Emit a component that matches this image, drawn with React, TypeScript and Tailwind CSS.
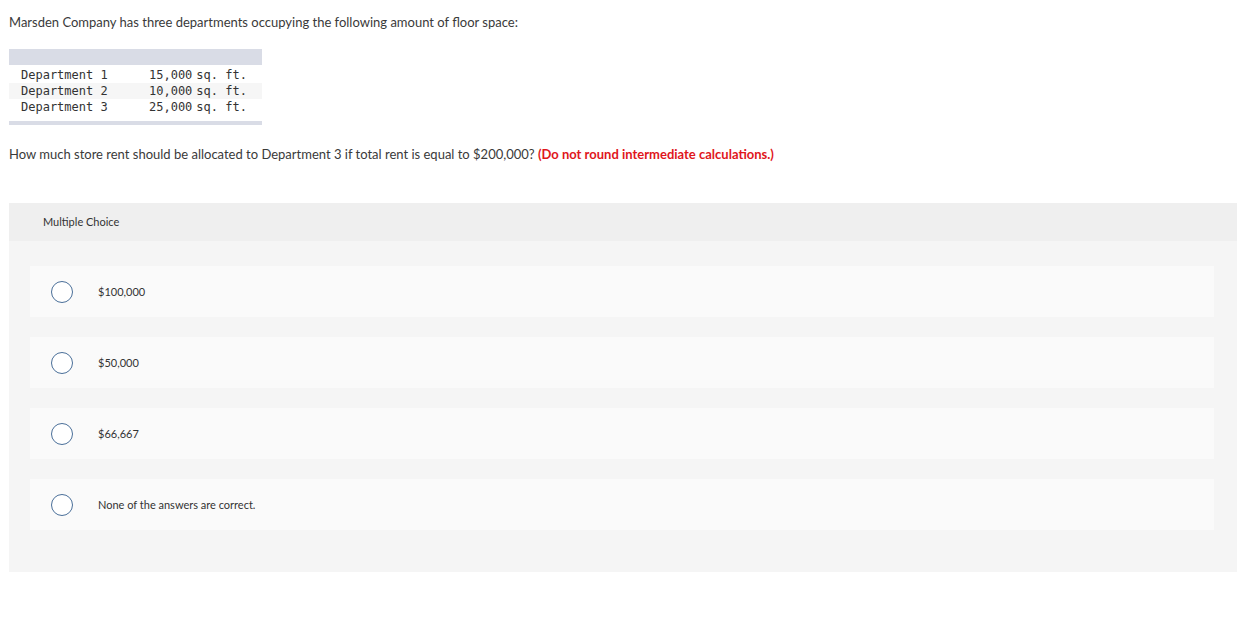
import React from "react";

const sans = { fontFamily: "Lato, 'Open Sans', sans-serif" };

const rows = [
  ["Department 1", "15,000", "sq. ft."],
  ["Department 2", "10,000", "sq. ft."],
  ["Department 3", "25,000", "sq. ft."],
];

const options = ["$100,000", "$50,000", "$66,667", "None of the answers are correct."];

export default function App() {
  return (
    <div className="bg-white w-[1249px] h-[619px] text-[#333]" style={sans}>
      <div className="pl-[9px] pr-[12px] pt-[13px]">
        <p className="text-[13px] leading-[18px] text-[#3a3a3a]">
          Marsden Company has three departments occupying the following amount of floor space:
        </p>
        <div className="mt-[18px] w-[253px]">
          <div className="h-[16px] bg-[#d9dce6]" />
          <div
            className="pt-[2px] text-[12px] text-[#333]"
            style={{ fontFamily: "'DejaVu Sans Mono', monospace" }}
          >
            {rows.map((r, i) => (
              <div
                key={i}
                className={`flex h-[16px] items-center ${i === 1 ? "bg-[#f6f6f6]" : "bg-white"}`}
              >
                <span className="w-[140px] pl-[12px] whitespace-pre">{r[0]}</span>
                <span className="whitespace-pre">{r[1]}</span>
                <span className="whitespace-pre ml-[4px]">{r[2]}</span>
              </div>
            ))}
          </div>
          <div className="mt-[6px] h-[4px] bg-[#d9dce6]" />
        </div>
        <p className="mt-[20px] text-[13px] leading-[18px] text-[#3a3a3a]">
          How much store rent should be allocated to Department 3 if total rent is equal to $200,000?{" "}
          <span className="font-bold text-[#e0161b]">(Do not round intermediate calculations.)</span>
        </p>
        <div className="mt-[40px] bg-[#f5f5f5] w-[1228px]">
          <div className="h-[38px] bg-[#efefef] flex items-center pl-[34px] pt-[1px] text-[11px] text-[#333]">
            Multiple Choice
          </div>
          <div className="pt-[25px] pb-[42px] pl-[21px] pr-[23px] flex flex-col gap-[20px]">
            {options.map((o, i) => (
              <div key={i} className="h-[51px] bg-[#fafafa] flex items-center">
                <span className="ml-[21px] w-[22px] h-[22px] rounded-full border border-[#4a6f99] bg-white shrink-0" />
                <span className="ml-[25px] pt-[1px] text-[11px] text-[#333]">{o}</span>
              </div>
            ))}
          </div>
        </div>
      </div>
    </div>
  );
}
